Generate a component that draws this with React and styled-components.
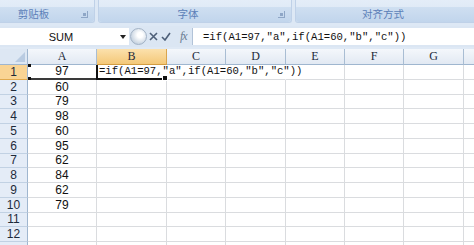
import React from "react";
import styled, { createGlobalStyle } from "styled-components";

const GlobalStyle = createGlobalStyle`
  html, body { margin: 0; padding: 0; background: #ffffff; }
  body { width: 474px; height: 245px; overflow: hidden; }
`;

const Window = styled.div`
  width: 474px;
  height: 245px;
  display: flex;
  flex-direction: column;
  overflow: hidden;
  background: #dfe9f5;
`;

/* ribbon groups */
const Ribbon = styled.div`
  height: 26px;
  flex: none;
  display: flex;
  gap: 3px;
  padding: 0 0 3px 0;
  box-sizing: border-box;
  background: #dde8f5;
  margin-left: -14px;
  margin-right: -20px;
`;

const Group = styled.div`
  width: ${({ w }) => w}px;
  flex: none;
  display: flex;
  flex-direction: column;
  border: 1px solid #bfd1e8;
  border-top: none;
  border-radius: 0 0 3px 3px;
  background: linear-gradient(#e4edf8, #d9e5f4);
  box-sizing: border-box;
`;

const GroupTop = styled.div`
  flex: 1;
`;

const GroupLabel = styled.div`
  height: 15px;
  display: flex;
  align-items: center;
  padding-right: 14px;
  position: relative;
  background: linear-gradient(#cfdff1, #c1d5ec);
  color: #5b7fb8;
  font: 10.5px "Noto Sans CJK SC", sans-serif;
  line-height: 1;
  border-radius: 0 0 3px 3px;
  span { flex: 1; text-align: center; }
`;

const Launcher = styled.i`
  position: absolute;
  right: 6px;
  top: 4px;
  width: 6px;
  height: 6px;
  border-right: 1px solid #8ea6c6;
  border-bottom: 1px solid #8ea6c6;
  &::after {
    content: "";
    position: absolute;
    right: 1px;
    bottom: 1px;
    width: 3px;
    height: 3px;
    background: #8ea6c6;
  }
`;

/* formula bar */
const FormulaBar = styled.div`
  height: 21px;
  flex: none;
  display: flex;
  align-items: center;
  background: #dbe6f3;
`;

const NameBox = styled.div`
  width: 129px;
  height: 17px;
  box-sizing: border-box;
  display: flex;
  align-items: center;
  background: #fff;
  font: 11px "Liberation Sans", Arial, sans-serif;
  color: #111;
  span { flex: 1; text-align: center; padding-left: 2px; }
`;

const Arrow = styled.b`
  width: 0;
  height: 0;
  border-left: 3px solid transparent;
  border-right: 3px solid transparent;
  border-top: 4px solid #222;
  margin-right: 3px;
`;

const Tools = styled.div`
  width: 63px;
  height: 21px;
  display: flex;
  align-items: center;
`;

const Knob = styled.div`
  width: 15px;
  height: 15px;
  border-radius: 50%;
  margin-left: 1px;
  background: radial-gradient(circle at 60% 40%, #ffffff 20%, #c9d5e2 70%, #a8b6c6);
  border: 1px solid #a3b3c6;
`;

const Ico = styled.div`
  display: flex;
  align-items: center;
  justify-content: center;
  width: ${({ w }) => w}px;
`;

const Fx = styled.span`
  font: italic 12px "Liberation Serif", serif;
  color: #6b7d92;
  margin-left: 9px;
  letter-spacing: -1px;
`;

const Input = styled.div`
  flex: 1;
  height: 17px;
  background: #fff;
  border-left: 1px solid #b2c3d8;
  display: flex;
  align-items: center;
  padding-left: 10px;
  font: 10.6px "Liberation Mono", monospace;
  color: #111;
  white-space: nowrap;
`;

/* sheet */
const Sheet = styled.div`
  flex: 1;
  display: grid;
  grid-template-columns: 28px 69px 70px 59px 60px 59px 59px 60px 60px;
  grid-template-rows: 16px repeat(13, 14.75px);
  background: #fff;
  margin-top: 2px;
`;

const Corner = styled.div`
  background: #dde7f3;
  border-right: 1px solid #9fb6cf;
  border-bottom: 1px solid #9fb6cf;
  position: relative;
  &::after {
    content: "";
    position: absolute;
    right: 2px;
    bottom: 2px;
    border-left: 10px solid transparent;
    border-bottom: 10px solid #b9cbe1;
  }
`;

const ColHead = styled.div`
  display: flex;
  align-items: center;
  justify-content: center;
  font: 12px "Liberation Serif", serif;
  color: #1d2a3a;
  border-right: 1px solid ${({ on }) => (on ? "#d9a54e" : "#a9bdd3")};
  border-bottom: 1px solid ${({ on }) => (on ? "#d29c41" : "#9fb6cf")};
  background: ${({ on }) =>
    on ? "linear-gradient(#fbe1ad, #f4c878)" : "linear-gradient(#f4f7fb, #e2e9f3)"};
`;

const RowHead = styled.div`
  display: flex;
  align-items: center;
  justify-content: center;
  font: 12px "Liberation Sans", Arial, sans-serif;
  color: #1d2a3a;
  border-right: 1px solid #9fb6cf;
  border-bottom: 1px solid ${({ on }) => (on ? "#e0a94e" : "#c1d1e3")};
  background: ${({ on }) => (on ? "#f9d494" : "#e4ecf7")};
`;

const Cell = styled.div`
  display: flex;
  align-items: center;
  justify-content: ${({ align }) => align || "flex-start"};
  font: 12px "Liberation Sans", Arial, sans-serif;
  color: #111;
  border-right: 1px solid ${({ bare }) => (bare ? "transparent" : "#dadcdf")};
  border-bottom: 1px solid #dadcdf;
  white-space: nowrap;
  min-width: 0;
`;

const RefCell = styled(Cell)`
  position: relative;
  border-bottom: 2px solid #3a3a3a;
  &::before,
  &::after {
    content: "";
    position: absolute;
    left: 0;
    width: 3px;
    height: 3px;
    background: #111;
  }
  &::before { top: -1px; }
  &::after { bottom: -2px; }
`;

const ActiveCell = styled(Cell)`
  position: relative;
  z-index: 1;
  border-left: 2px solid #111;
  margin-left: -1px;
  border-bottom: 2px solid #111;
  font: 10.6px "Liberation Mono", monospace;
  padding-left: 1px;
  overflow: visible;
  &::after {
    content: "";
    position: absolute;
    right: -2px;
    bottom: -3px;
    width: 4px;
    height: 4px;
    background: #111;
    border: 1px solid #fff;
  }
`;

// last column is only a sliver at the right edge, its letter is off screen
const cols = ["A", "B", "C", "D", "E", "F", "G", ""];
const values = [97, 60, 79, 98, 60, 95, 62, 84, 62, 79];
const formula = '=if(A1=97,"a",if(A1=60,"b","c"))';

export default function App() {
  return (
    <Window>
      <GlobalStyle />
      <Ribbon>
        <Group w={109}>
          <GroupTop />
          <GroupLabel>
            <span>剪贴板</span>
            <Launcher />
          </GroupLabel>
        </Group>
        <Group w={194}>
          <GroupTop />
          <GroupLabel>
            <span>字体</span>
            <Launcher />
          </GroupLabel>
        </Group>
        <Group w={190}>
          <GroupTop />
          <GroupLabel>
            <span>对齐方式</span>
          </GroupLabel>
        </Group>
      </Ribbon>

      <FormulaBar>
        <NameBox>
          <span>SUM</span>
          <Arrow />
        </NameBox>
        <Tools>
          <Knob />
          <Ico w={13}>
            <svg width="9" height="9" viewBox="0 0 9 9">
              <path d="M1 1 L8 8 M8 1 L1 8" stroke="#4d5f78" strokeWidth="1.6" />
            </svg>
          </Ico>
          <Ico w={11}>
            <svg width="10" height="9" viewBox="0 0 10 9">
              <path d="M1 5 L4 8 L9 1" fill="none" stroke="#4d5f78" strokeWidth="1.6" />
            </svg>
          </Ico>
          <Fx>fx</Fx>
        </Tools>
        <Input>{formula}</Input>
      </FormulaBar>

      <Sheet>
        <Corner />
        {cols.map((c, i) => (
          <ColHead key={i} on={c === "B"}>
            {c}
          </ColHead>
        ))}
        {Array.from({ length: 13 }, (_, r) => {
          const n = r + 1;
          const v = values[r];
          return (
            <React.Fragment key={n}>
              <RowHead on={n === 1}>{n < 13 ? n : ""}</RowHead>
              {n === 1 ? (
                <>
                  <RefCell align="center">{v}</RefCell>
                  <ActiveCell bare>{formula}</ActiveCell>
                  <Cell bare />
                  <Cell bare />
                  <Cell />
                  <Cell />
                  <Cell />
                  <Cell />
                </>
              ) : (
                <>
                  <Cell align="center">{v}</Cell>
                  <Cell />
                  <Cell />
                  <Cell />
                  <Cell />
                  <Cell />
                  <Cell />
                  <Cell />
                </>
              )}
            </React.Fragment>
          );
        })}
      </Sheet>
    </Window>
  );
}
